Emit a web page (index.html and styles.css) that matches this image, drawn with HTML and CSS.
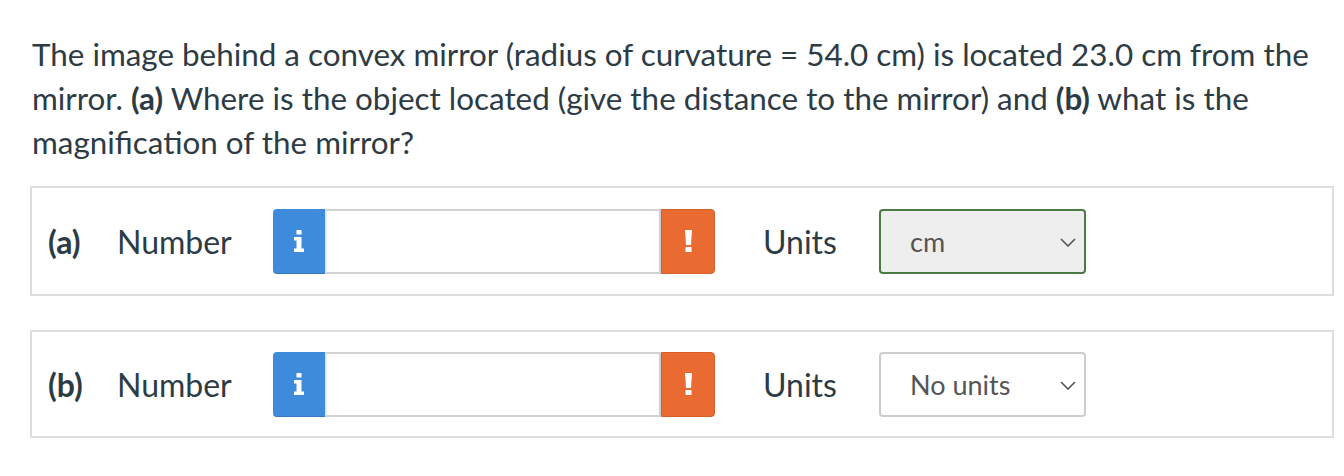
FILE: index.html
```html
<!DOCTYPE html>
<html>
<head>
<meta charset="utf-8">
<link rel="stylesheet" href="styles.css">
</head>
<body>
<div class="page">
  <p class="question">The image behind a convex mirror (radius of curvature = 54.0 cm) is located 23.0 cm from the mirror. <b>(a)</b> Where is the object located (give the distance to the mirror) and <b>(b)</b> what is the magnification of the mirror?</p>

  <div class="part">
    <span class="part-label">(a)</span>
    <span class="field-label">Number</span>
    <div class="answer">
      <span class="btn btn-info"><svg width="10" height="22" viewBox="0 0 10 22"><rect x="2.5" y="0" width="5" height="4.5" fill="#fff"/><path d="M0 7h7.5v11.5H10V22H0v-3.5h2.5V10.5H0z" fill="#fff"/></svg></span>
      <span class="input"></span>
      <span class="btn btn-warn"><svg width="7" height="22" viewBox="0 0 7 22"><path d="M0 0h7l-1 15H1z" fill="#fff"/><rect x="0.5" y="17" width="6" height="5" fill="#fff"/></svg></span>
    </div>
    <span class="units-label">Units</span>
    <div class="select select-ok"><span>cm</span><svg class="chev" width="16" height="9" viewBox="0 0 16 9"><path d="M1 1l7 7 7-7" fill="none" stroke="#555" stroke-width="1.6"/></svg></div>
  </div>

  <div class="part">
    <span class="part-label">(b)</span>
    <span class="field-label">Number</span>
    <div class="answer">
      <span class="btn btn-info"><svg width="10" height="22" viewBox="0 0 10 22"><rect x="2.5" y="0" width="5" height="4.5" fill="#fff"/><path d="M0 7h7.5v11.5H10V22H0v-3.5h2.5V10.5H0z" fill="#fff"/></svg></span>
      <span class="input"></span>
      <span class="btn btn-warn"><svg width="7" height="22" viewBox="0 0 7 22"><path d="M0 0h7l-1 15H1z" fill="#fff"/><rect x="0.5" y="17" width="6" height="5" fill="#fff"/></svg></span>
    </div>
    <span class="units-label">Units</span>
    <div class="select"><span>No units</span><svg class="chev" width="16" height="9" viewBox="0 0 16 9"><path d="M1 1l7 7 7-7" fill="none" stroke="#555" stroke-width="1.6"/></svg></div>
  </div>
</div>
</body>
</html>
```

FILE: styles.css
```css
* { box-sizing: border-box; }
html, body { margin: 0; padding: 0; background: #fff; }
body { font-family: Lato, "Open Sans", sans-serif; color: #2d3b45; }
.page { padding: 32px 10px 0 30px; }
.question {
  margin: 0 0 22px 2px;
  font-size: 31.4px;
  line-height: 44px;
}
.question b { font-weight: 700; }
.part {
  display: flex;
  align-items: center;
  border: 2px solid #ddd;
  height: 110px;
  padding: 0 0 0 16px;
  margin-bottom: 34px;
}
.part + .part { height: 108px; }
.part-label { font-weight: 700; font-size: 32px; width: 69px; }
.field-label { font-size: 32px; width: 156px; }
.answer { display: flex; height: 65px; }
.btn {
  width: 54px;
  display: flex;
  align-items: center;
  justify-content: center;
}
.btn-info { width: 52px; background: #3f8bdb; border-radius: 4px 0 0 4px; border-bottom: 1px solid #3578c2; }
.btn-warn { background: #e96b32; border-radius: 0 4px 4px 0; border: 1px solid #d85e28; }
.input {
  width: 336px;
  background: #fff;
  border: 2px solid #d2d2d2;
  border-right: 2px solid #cfcfcf;
  border-left: 2px solid #e6e6e6;
}
.units-label { font-size: 32px; margin-left: 48px; width: 116px; }
.select {
  width: 207px;
  height: 65px;
  border: 2px solid #ccc;
  border-radius: 4px;
  display: flex;
  align-items: center;
  justify-content: space-between;
  padding: 0 8px 0 29px;
  font-size: 27px;
  color: #555;
}
.select-ok { border-color: #4b7a44; background: #eee; }
.chev { margin-top: 2px; }
```
